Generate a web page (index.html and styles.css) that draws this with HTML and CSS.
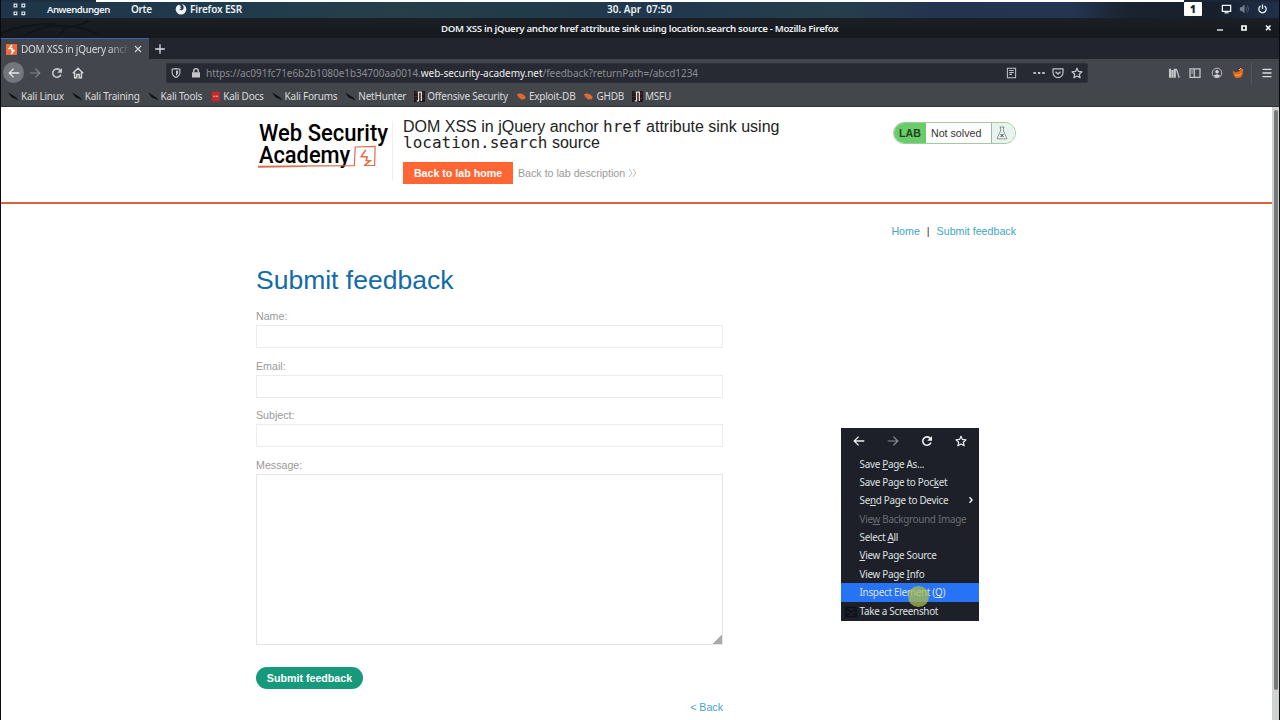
FILE: index.html
```html
<!DOCTYPE html>
<html lang="en">
<head>
  <meta charset="UTF-8">
  <title>DOM XSS in jQuery anchor href attribute sink using location.search source</title>
  <link rel="stylesheet" href="styles.css">
</head>
<body>
  <!-- shared icons -->
  <svg class="defs" width="0" height="0">
    <symbol id="back" viewBox="0 0 12 12"><path d="M11.3 6H1.2M5.6 1.6 1.2 6l4.4 4.4" fill="none" stroke="currentColor" stroke-width="1.3"/></symbol>
    <symbol id="forward" viewBox="0 0 12 12"><path d="M.7 6h10.1M6.4 1.6 10.8 6l-4.4 4.4" fill="none" stroke="currentColor" stroke-width="1.2"/></symbol>
    <symbol id="reload" viewBox="0 0 12 12"><path d="M9.9 7.6A4.2 4.2 0 1 1 9.4 3.6" fill="none" stroke="currentColor" stroke-width="1.6"/><path d="M11 1v4.8H6.2z" fill="currentColor"/></symbol>
    <symbol id="star" viewBox="0 0 12 12"><path d="m6 1.2 1.4 3.2 3.6.4-2.7 2.4.8 3.6L6 9l-3.1 1.8.8-3.6L1 4.8l3.6-.4z" fill="none" stroke="currentColor" stroke-width="1.2" stroke-linejoin="round"/></symbol>
    <symbol id="kali" viewBox="0 0 12 12"><path d="M0 1.3 4.5 4 9 7.2l2.6 3.5-3.5-2L4 7z" fill="#111317"/></symbol>
    <symbol id="offsec" viewBox="0 0 12 12"><path d="M0 0h12v12H0z" fill="#20191b"/><path d="M1 2h2M9 3h2M1 6h2M9 8h2" stroke="#70302c"/><path d="M4 1.3h4V11M5 2v8.7H3" fill="none" stroke="#e5ded9" stroke-width="1.4"/></symbol>
    <symbol id="bug" viewBox="0 0 12 12"><path d="M1 3.8 4 2.5l4 1.2 2.8 3-1.5 2.4-3.6.2L3 7.2z" fill="#dc6b35"/><path d="m1.5 7 3 1M8 3l2-.5" stroke="#84472f"/></symbol>
  </svg>

  <div class="desktop">
    <div class="topline"></div>
    <div class="panel">
      <svg class="apps" viewBox="0 0 12 12"><path d="M1 1h2.5v2.5H1zM8.3 1h2.5v2.5H8.3zM1 8.3h2.5v2.5H1zM8.3 8.3h2.5v2.5H8.3z" fill="none" stroke="#dce4ea" stroke-width="1.1"/></svg>
      <span class="panel-apps">Anwendungen</span>
      <span class="panel-places">Orte</span>
      <svg class="panel-firefox" viewBox="0 0 12 12"><circle cx="6" cy="6.2" r="5.3" fill="#f1f4f6"/><path d="M2.6.6c1 1.2 1.9 1.9 3.7 2.3L4.8 4.2l1.8.9c-.7.8-1.3 1-2.2.9 1 1.9 3.6 1.5 4.1-.4.4-1.5 0-2.7-.8-3.6L6 .6" fill="#24384b"/></svg>
      <span class="panel-title">Firefox ESR</span>
      <span class="clock">30. Apr&nbsp; 07:50</span>
      <div class="tray">
        <b class="workspace">1</b>
        <svg class="screen" viewBox="0 0 12 12"><path d="M1.5 2h9v6.7h-9z" fill="none" stroke="#f3f5f7" stroke-width="1.4"/><path d="M3.8 10.2h4.4" stroke="#f3f5f7" stroke-width="1.3"/></svg>
        <svg class="sound" viewBox="0 0 12 12"><path d="M1 4h2l3-3v10L3 8H1z" fill="#76818d"/><path d="M7.5 4q1.5 2 0 4M9 2q3 4 0 8" fill="none" stroke="#56606e"/></svg>
        <svg class="power" viewBox="0 0 12 12"><path d="M3.8 2.8a4 4 0 1 0 4.4 0M6 1v5" fill="none" stroke="#f3f5f7" stroke-width="1.4"/></svg>
      </div>
    </div>

    <div class="titlebar">
      <svg class="dragon" viewBox="0 0 110 19"><path d="M0 14q22-9 54-9M22 18q14-10 32-11 24-2 44 9M62 9q12-1 26-7M64 9l-6 8" fill="none" stroke="#121417" stroke-width="2"/></svg>
      <span class="window-title">DOM XSS in jQuery anchor href attribute sink using location.search source - Mozilla Firefox</span>
      <svg class="window-buttons" viewBox="0 0 60 12"><path d="M3 8h6" stroke="#fff" stroke-width="1.3"/><path d="M28 4h4v4h-4z" fill="none" stroke="#fff" stroke-width="1.7"/><path d="m52 3.5 4.5 4.8m0-4.8L52 8.3" stroke="#fff" stroke-width="1.5"/></svg>
    </div>

    <div class="tabs">
      <div class="tab">
        <svg class="favicon" viewBox="0 0 12 12"><path d="M0 0h12v12H0z" fill="#ef6b3c"/><path d="M6.6 1 3.5 4.8h3v2.4h2L5.7 11" fill="none" stroke="#fff" stroke-width="1.6"/></svg>
        <span class="tab-title">DOM XSS in jQuery anch</span>
        <svg class="tab-close" viewBox="0 0 8 8"><path d="m1 1 6 6m0-6L1 7" stroke="#d7d8db" stroke-width="1.1"/></svg>
      </div>
      <svg class="new-tab" viewBox="0 0 12 12"><path d="M6 1.2v9.6M1.2 6h9.6" stroke="#dedfe2" stroke-width="1.3"/></svg>
    </div>

    <div class="toolbar">
      <div class="nav-back"><svg><use href="#back"/></svg></div>
      <svg class="nav-forward"><use href="#forward"/></svg>
      <svg class="nav-reload"><use href="#reload"/></svg>
      <svg class="nav-home" viewBox="0 0 12 12"><path d="M.8 6.2 6 1.2l5.2 5M2.6 5.5v5.2h2.2V7.5h2.4v3.2h2.2V5.5" fill="none" stroke="#d8d9db" stroke-width="1.4"/></svg>
      <div class="urlbar">
        <svg class="shield" viewBox="0 0 12 12"><path d="M6 1.6 9.9 2.3v3c0 2.6-1.7 4.2-3.9 5.2-2.2-1-3.9-2.6-3.9-5.2v-3z" fill="none" stroke="#c2c4c7" stroke-width="1.1"/><path d="M6 3.4v5.3c1.4-.9 2.2-1.9 2.2-3.6V3.8z" fill="#c2c4c7"/></svg>
        <svg class="lock" viewBox="0 0 12 12"><path d="M3.7 5V3.9a2.3 2.3 0 0 1 4.6 0V5" fill="none" stroke="#c2c4c7" stroke-width="1.4"/><path d="M2 5.2h8v5.3H2z" fill="#c2c4c7"/></svg>
        <span class="url">https://ac091fc71e6b2b1080e1b34700aa0014.<b>web-security-academy.net</b>/feedback?returnPath=/abcd1234</span>
        <svg class="reader" viewBox="0 0 12 12"><path d="M1.5.8h9v10.4h-9zM3.5 3.3h5M3.5 5.4h5M3.5 7.5h3" fill="none" stroke="#c2c4c7" stroke-width="1.1"/></svg>
        <svg class="more" viewBox="0 0 12 12"><path d="M.5 6h2.4M4.9 6h2.4M9.3 6h2.4" stroke="#c2c4c7" stroke-width="2"/></svg>
        <svg class="pocket" viewBox="0 0 12 12"><path d="M1 1.8h10v3.8a5 5 0 0 1-10 0z" fill="none" stroke="#c2c4c7" stroke-width="1.2"/><path d="m3.5 4.7 2.5 2.4 2.5-2.4" fill="none" stroke="#c2c4c7" stroke-width="1.4"/></svg>
        <svg class="bookmark"><use href="#star"/></svg>
      </div>
      <div class="tools">
        <svg viewBox="0 0 12 12"><path d="M2 1.8v9M4.4 3v7.8M6.8 1.8v9" stroke="#c5c7c9" stroke-width="2.1"/><path d="m8.4 2 2.8 8.7" stroke="#c5c7c9" stroke-width="1.2"/></svg>
        <svg viewBox="0 0 12 12"><path d="M1 1.8h10v8.5H1zM5.3 2v8" fill="none" stroke="#c5c7c9" stroke-width="1.3"/><path d="M2.2 4h2M2.2 6h2" stroke="#c5c7c9"/></svg>
        <svg viewBox="0 0 12 12"><circle cx="6" cy="6" r="4.8" fill="none" stroke="#b9bbbd" stroke-width="1"/><circle cx="6" cy="4.7" r="1.8" fill="#d6d7d9"/><path d="M2.8 8.8Q6 5.5 9.2 8.8 6 11.8 2.8 8.8" fill="#d6d7d9"/></svg>
        <svg viewBox="0 0 12 12"><path d="M.8 3.6 3.3 5.6 7 4.5 9.2 1.3l2 1-.4 4.7-2 3.5-4.9.8L1.5 8z" fill="#e66a19"/><path d="M7 3 9 1M3 8l3 .7 3-2" stroke="#ffb24d" fill="none"/></svg>
        <i class="divider"></i>
        <svg viewBox="0 0 12 12"><path d="M1.5 2.3h9M1.5 6h9M1.5 9.7h9" stroke="#d9dadc" stroke-width="1.3"/></svg>
      </div>
    </div>

    <div class="bookmarks">
      <a><svg><use href="#kali"/></svg>Kali Linux</a>
      <a><svg><use href="#kali"/></svg>Kali Training</a>
      <a><svg><use href="#kali"/></svg>Kali Tools</a>
      <a><svg viewBox="0 0 12 12"><path d="M2 .5h8.5v10.8H2z" fill="#c7292c"/><path d="M3.5 5.7h1.6M6 5.7h2.7" stroke="#f2c5c5" stroke-width="1.3"/></svg>Kali Docs</a>
      <a><svg><use href="#kali"/></svg>Kali Forums</a>
      <a><svg><use href="#kali"/></svg>NetHunter</a>
      <a><svg><use href="#offsec"/></svg>Offensive Security</a>
      <a><svg><use href="#bug"/></svg>Exploit-DB</a>
      <a><svg><use href="#bug"/></svg>GHDB</a>
      <a><svg><use href="#offsec"/></svg>MSFU</a>
    </div>

    <div class="viewport">
      <div class="page">
        <header class="lab-header">
          <div class="container header-inner">
            <svg class="logo" viewBox="0 0 137 60">
              <text x="3" y="20" textLength="130" lengthAdjust="spacingAndGlyphs">Web Security</text>
              <text x="3" y="42" textLength="92" lengthAdjust="spacingAndGlyphs">Academy</text>
              <path d="M2 45.5 99 44.8 100 26l20-.6-.5 19.2-10.8-.1M2 46.3l49-.7" fill="none" stroke="#d96e4e" stroke-width="1.2"/>
              <path d="m110.5 29-4.5 6.5 6 .5-1 3.5 4 .2-5.5 4.5" fill="none" stroke="#e66f4b" stroke-width="1.6"/>
            </svg>
            <div class="lab-title">
              <h2>DOM XSS in jQuery anchor <code>href</code> attribute sink using<br><code>location.search</code> source</h2>
              <div class="lab-links">
                <a class="lab-home">Back to lab home</a>
                <a class="lab-description">Back to lab description</a>
                <svg class="chevrons" viewBox="0 0 9 10"><path d="m1 1 3 4-3 4M5 1l3 4-3 4" fill="none" stroke="#aaa" stroke-width=".8"/></svg>
              </div>
            </div>
            <div class="lab-status">
              <b>LAB</b><span>Not solved</span>
              <i><svg viewBox="0 0 12 14"><path d="M3.5 1h5M4.5 1v4L1 12.8h10L7.5 5V1" fill="none" stroke="#778580" stroke-width=".8"/><path d="m4.5 8 3 3m0-3-3 3" stroke="#333" stroke-width="1"/></svg></i>
            </div>
          </div>
        </header>
        <main class="container">
          <nav class="page-nav"><a>Home</a><span>|</span><a>Submit feedback</a></nav>
          <h1>Submit feedback</h1>
          <form class="feedback">
            <label>Name:</label>
            <input type="text">
            <label>Email:</label>
            <input type="text">
            <label>Subject:</label>
            <input type="text">
            <label>Message:</label>
            <textarea></textarea>
            <button type="button">Submit feedback</button>
            <a class="back-link">&lt; Back</a>
          </form>
        </main>
      </div>
      <div class="scrollbar"><div class="thumb"></div></div>
    </div>

    <div class="context-menu">
      <div class="menu-icons">
        <svg><use href="#back"/></svg>
        <svg class="menu-forward"><use href="#forward"/></svg>
        <svg><use href="#reload"/></svg>
        <svg><use href="#star"/></svg>
      </div>
      <div class="item">Save <u>P</u>age As...</div>
      <div class="item">Save Page to Poc<u>k</u>et</div>
      <div class="item">Se<u>n</u>d Page to Device<svg class="arrow" viewBox="0 0 6 8"><path d="m1.5 1.3 2.6 2.7-2.6 2.7" fill="none" stroke="#fff" stroke-width="1.3"/></svg></div>
      <div class="item disabled">Vie<u>w</u> Background Image</div>
      <div class="item">Select <u>A</u>ll</div>
      <div class="item"><u>V</u>iew Page Source</div>
      <div class="item">View Page <u>I</u>nfo</div>
      <div class="item selected">Inspect Element (<u>Q</u>)</div>
      <div class="item">Take a Screenshot<svg class="shot" viewBox="0 0 12 12"><path d="M1 1.5h10v9H1zM2 3l8 6M2 9l8-6" fill="none" stroke="#0d0f13" stroke-width="1.5"/></svg></div>
      <div class="pointer"></div>
    </div>
  </div>
</body>
</html>
```
FILE: styles.css
```css
* {
  box-sizing: border-box;
}

body {
  margin: 0;
  font-family: "Noto Sans", sans-serif;
  font-size: 10px;
}

svg {
  display: block;
  flex: none;
  width: 12px;
  height: 12px;
}

.defs {
  position: absolute;
  width: 0;
  height: 0;
}

.desktop {
  position: relative;
  display: flex;
  flex-direction: column;
  width: 1280px;
  height: 720px;
  overflow: hidden;
  border-left: 1px solid #080a0d;
  border-right: 1px solid #080a0d;
  background: #fff;
  white-space: nowrap;
}

.topline {
  flex: none;
  height: 2px;
  margin-left: 95px;
  margin-right: 95px;
  background: #fff;
  box-shadow: -95px 0 #1c2f42, 95px 0 #1b2638;
}

/* desktop panel */
.panel {
  flex: none;
  display: flex;
  align-items: center;
  height: 16px;
  padding-bottom: 2px;
  background: linear-gradient(90deg, #1f3448, #203c4c 20%, #263f49 31%, #213c49 40%, #20384e 52%, #263f4b 65%, #233450 73%, #233550 84%, #1a2330 88%, #171f2c 95%, #20304c);
  color: #eef2f5;
  font-weight: 600;
}

.apps {
  width: 13px;
  height: 13px;
  margin-left: 12px;
}

.panel-apps {
  width: 84px;
  margin-left: 21px;
  font-size: 9.6px;
  letter-spacing: -0.5px;
}

.panel-places {
  width: 44px;
  letter-spacing: -0.3px;
}

.panel-firefox {
  margin-right: 3px;
}

.panel-title {
  width: 54px;
  letter-spacing: -0.15px;
}

.clock {
  margin-left: 363px;
}

.tray {
  display: flex;
  align-items: center;
  margin-left: auto;
}

.workspace {
  width: 18px;
  height: 14px;
  margin-right: 19px;
  border-radius: 1px;
  background: #fff;
  color: #222;
  line-height: 14px;
  text-align: center;
}

.screen {
  width: 11px;
  margin-right: 7px;
}

.sound {
  width: 11px;
  margin-right: 7px;
}

.power {
  width: 11px;
  margin-right: 11px;
}

.titlebar {
  flex: none;
  display: flex;
  align-items: center;
  height: 20px;
  background: linear-gradient(#1b1e24, #15181d);
  color: #eceef0;
  font-weight: 600;
}

.dragon {
  width: 110px;
  height: 19px;
}

.window-title {
  width: 402px;
  margin-left: 330px;
  font-size: 9.7px;
  letter-spacing: -0.32px;
}

.window-buttons {
  width: 60px;
  margin-left: auto;
  margin-right: 5px;
}

/* browser chrome */
.tabs {
  flex: none;
  display: flex;
  align-items: center;
  height: 21px;
  background: #23252e;
}

.tab {
  display: flex;
  align-items: center;
  width: 148px;
  height: 21px;
  padding-left: 5px;
  border-top: 1px solid #3467b8;
  background: #43464d;
  color: #d8d9dc;
}

.favicon {
  width: 11px;
  height: 11px;
}

.tab-title {
  width: 109px;
  margin: 0 6px 0 4px;
  letter-spacing: -0.25px;
  -webkit-mask: linear-gradient(90deg, #000 80%, transparent);
  mask: linear-gradient(90deg, #000 80%, transparent);
}

.tab-close {
  width: 8px;
  height: 8px;
  margin-left: -2px;
}

.new-tab {
  margin-left: 5px;
}

.toolbar {
  flex: none;
  display: flex;
  align-items: center;
  height: 27px;
  background: #43464d;
  color: #c8cacc;
}

.nav-back {
  display: flex;
  align-items: center;
  justify-content: center;
  width: 21px;
  height: 21px;
  margin-left: 2px;
  border-radius: 50%;
  background: #73767b;
  color: #e5e6e7;
}

.nav-forward {
  margin-left: 5px;
  color: #83868b;
}

.nav-reload {
  margin-left: 10px;
}

.nav-home {
  margin-left: 9px;
}

.urlbar {
  display: flex;
  align-items: center;
  width: 922px;
  height: 20px;
  margin-left: 82px;
  padding-left: 4px;
  border: 1px solid #2e3139;
  border-radius: 2px;
  background: #272a33;
}

.shield {
  margin-left: -1px;
}

.lock {
  margin-left: 8px;
}

.url {
  margin-left: 4px;
  color: #8b8d92;
  letter-spacing: -0.05px;
}

.url b {
  color: #eceeef;
  font-weight: 400;
}

.reader {
  width: 11px;
  margin-left: auto;
}

.more {
  margin-left: 16px;
}

.pocket {
  margin-left: 7px;
}

.bookmark {
  margin: 0 4px 0 7px;
}

.tools {
  display: flex;
  align-items: center;
  margin-left: auto;
  margin-right: 6px;
  gap: 9.5px;
}

.tools svg:first-child {
  margin-right: -1px;
}

.tools svg:nth-child(2) {
  margin-right: 0.5px;
}

.tools svg:nth-child(4) {
  margin-right: -1px;
}

.tools .divider {
  width: 1px;
  height: 22px;
  margin: 0 0 0 -2px;
  background: #54575d;
}

.bookmarks {
  flex: none;
  display: flex;
  align-items: center;
  gap: 8px;
  height: 21px;
  padding-left: 7px;
  border-bottom: 1px solid #303236;
  background: #43464b;
  color: #dadbdd;
  letter-spacing: -0.23px;
}

.bookmarks a {
  display: flex;
  align-items: center;
  gap: 2px;
}

.bookmarks svg {
  width: 11px;
  height: 11px;
}

/* web page */
.viewport {
  flex: 1;
  display: flex;
  min-height: 0;
  font-family: "Liberation Sans", sans-serif;
  font-size: 10.67px;
}

.page {
  width: 1271px;
}

.container {
  width: 760px;
  margin-left: 255px;
}

.lab-header {
  height: 97px;
  border-bottom: 2px solid #d9623f;
}

.header-inner {
  display: flex;
}

.logo {
  width: 137px;
  height: 60px;
  margin-top: 14px;
  border-right: 1px solid #eee;
  overflow: visible;
}

.logo text {
  font-family: Roboto, sans-serif;
  font-size: 23.5px;
  font-weight: 500;
}

.lab-title {
  margin: 12px 0 0 10px;
}

h2 {
  margin: 0;
  color: #222;
  font-size: 16px;
  font-weight: 400;
  line-height: 16px;
}

h2 code {
  font-family: "DejaVu Sans Mono", monospace;
  font-size: 16px;
  line-height: 1;
}

.lab-links {
  display: flex;
  align-items: center;
  margin-top: 11px;
  color: #999;
}

.lab-home {
  width: 110px;
  height: 22px;
  margin-right: 5px;
  background: #ff6633;
  color: #fff;
  font-weight: bold;
  line-height: 22px;
  text-align: center;
}

.chevrons {
  width: 9px;
  height: 10px;
  margin-left: 3px;
}

.lab-status {
  display: flex;
  width: 123px;
  height: 22px;
  margin: 15px 0 0 auto;
  overflow: hidden;
  border: 1px solid #a3c9a3;
  border-radius: 11px;
  color: #333;
  line-height: 21px;
}

.lab-status b {
  width: 32px;
  padding-left: 5px;
  background: #69cc69;
  color: #214021;
}

.lab-status span {
  width: 65px;
  padding-left: 5px;
}

.lab-status i {
  flex: 1;
  padding: 3px 0 0 4px;
  border-left: 1px solid #9fb5ab;
  background: #e8f3ef;
}

.lab-status i svg {
  height: 14px;
}

.page-nav {
  display: flex;
  justify-content: flex-end;
  gap: 7px;
  padding-top: 21px;
  color: #333;
  line-height: 12px;
}

.page-nav a,
.back-link {
  color: #42a5c7;
}

h1 {
  margin: 27px 0 14px;
  color: #136ba7;
  font-size: 26.5px;
  font-weight: 400;
  line-height: 32px;
}

.feedback {
  display: flex;
  flex-direction: column;
  width: 467px;
}

.feedback label {
  height: 15px;
  color: #999;
  line-height: 12px;
}

.feedback input {
  height: 23px;
  margin: 0 0 11.7px;
  border: 1px solid #ececec;
}

.feedback textarea {
  height: 171px;
  margin: 0;
  border: 1px solid #e5e5e5;
}

.feedback textarea::-webkit-resizer {
  background: linear-gradient(135deg, #fff 68%, #aaa 69%);
}

.feedback button {
  width: 107px;
  height: 22px;
  margin-top: 22px;
  padding: 0;
  border: 0;
  border-radius: 11px;
  background: #17997b;
  color: #fff;
  font-family: inherit;
  font-size: 10.67px;
  font-weight: bold;
}

.back-link {
  align-self: flex-end;
  margin-top: 12px;
  line-height: 12px;
}

.scrollbar {
  width: 7px;
  padding: 3px 1px 0 2px;
  background: #d0d1d1;
}

.thumb {
  height: 580px;
  border-radius: 2px;
  background: #777879;
}

/* right click menu */
.context-menu {
  position: absolute;
  top: 428px;
  left: 840px;
  width: 138px;
  height: 193px;
  background: #1e2029;
  color: #dfe0e2;
  font-size: 9.9px;
  letter-spacing: -0.28px;
}

.menu-icons {
  display: flex;
  align-items: center;
  justify-content: space-between;
  height: 26.5px;
  padding: 0 12px;
  color: #f0f0f1;
}

.menu-icons .menu-forward {
  color: #8a8c91;
}

.item {
  position: relative;
  height: 18.4px;
  padding-left: 18.5px;
  line-height: 18.4px;
}

.item u {
  text-underline-offset: 1px;
}

.item.disabled {
  color: #6a6d73;
}

.item.selected {
  background: #2674f5;
}

.arrow {
  position: absolute;
  top: 5px;
  right: 5px;
  width: 6px;
  height: 8px;
}

.shot {
  position: absolute;
  top: 4px;
  left: 4px;
}

.pointer {
  position: absolute;
  top: 158px;
  left: 67px;
  width: 21px;
  height: 21px;
  border-radius: 50%;
  background: rgba(168, 187, 75, 0.75);
}
```
